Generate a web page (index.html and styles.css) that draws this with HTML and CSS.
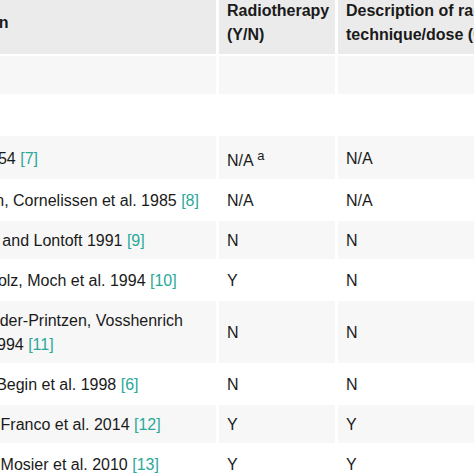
FILE: index.html
```html
<!DOCTYPE html>
<html lang="en">
<head>
    <meta charset="UTF-8">
    <meta name="viewport" content="width=device-width, initial-scale=1.0">
    <title>Radiotherapy table</title>
    <link rel="stylesheet" href="styles.css">
</head>
<body>
    <div class="frame">
        <table class="study-table">
            <colgroup>
                <col class="col-study">
                <col class="col-rt">
                <col class="col-desc">
            </colgroup>
            <thead>
                <tr>
                    <th>Citation</th>
                    <th>Radiotherapy (Y/N)</th>
                    <th>Description of radiotherapy technique/dose (Gy)</th>
                </tr>
            </thead>
            <tbody>
                <tr><td>&nbsp;</td><td></td><td></td></tr>
                <tr><td>&nbsp;</td><td></td><td></td></tr>
                <tr>
                    <td>Lee 1954 <a class="ref">[7]</a></td>
                    <td>N/A <sup class="note">a</sup></td>
                    <td>N/A</td>
                </tr>
                <tr>
                    <td>Hansen, Cornelissen et al. 1985 <a class="ref">[8]</a></td>
                    <td>N/A</td>
                    <td>N/A</td>
                </tr>
                <tr>
                    <td>Larsen and Lontoft 1991 <a class="ref">[9]</a></td>
                    <td>N</td>
                    <td>N</td>
                </tr>
                <tr>
                    <td>Stockholz, Moch et al. 1994 <a class="ref">[10]</a></td>
                    <td>Y</td>
                    <td>N</td>
                </tr>
                <tr>
                    <td>Schroeder-Printzen, Vosshenrich et&nbsp;al. 1994 <a class="ref">[11]</a></td>
                    <td>N</td>
                    <td>N</td>
                </tr>
                <tr>
                    <td>Dubé, Begin et al. 1998 <a class="ref">[6]</a></td>
                    <td>N</td>
                    <td>N</td>
                </tr>
                <tr>
                    <td>Couto, Franco et al. 2014 <a class="ref">[12]</a></td>
                    <td>Y</td>
                    <td>Y</td>
                </tr>
                <tr>
                    <td>Jones, Mosier et al. 2010 <a class="ref">[13]</a></td>
                    <td>Y</td>
                    <td>Y</td>
                </tr>
            </tbody>
        </table>
    </div>
</body>
</html>
```

FILE: styles.css
```css
body {
    margin: 0;
    background-color: #fff;
    color: #1a1a1a;
    font-family: "Liberation Sans", Arial, sans-serif;
}
.frame {
    width: 474px;
    height: 474px;
    overflow: hidden;
}
.study-table {
    border-collapse: separate;
    border-spacing: 3px 2px;
    table-layout: fixed;
    width: 663px;
    margin: -10px 0 0 -62px;
    font-size: 16px;
    line-height: 24px;
}
.col-study {
    width: 275px;
}
.col-rt {
    width: 116px;
}
.col-desc {
    width: 260px;
}
.study-table th,
.study-table td {
    padding: 8px 8px 6px;
    text-align: left;
    vertical-align: middle;
}
.study-table th {
    padding: 7px 8px;
    background-color: #ebebeb;
    font-weight: bold;
}
.study-table tbody tr:nth-child(odd) td {
    background-color: #f7f7f7;
}
.ref {
    color: #2aa99a;
}
.note {
    font-size: 13px;
}
```
